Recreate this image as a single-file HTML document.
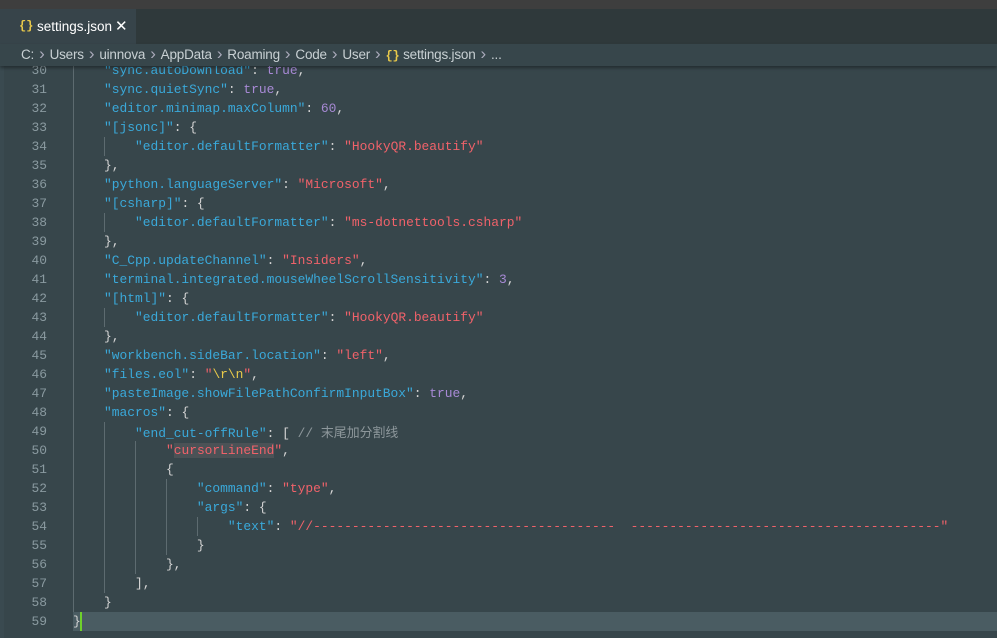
<!DOCTYPE html>
<html><head><meta charset="utf-8"><style>
body{margin:0;width:997px;height:638px;overflow:hidden;background:#37464b;font-family:"Liberation Sans","Noto Sans CJK SC",sans-serif;position:relative}
#top{position:absolute;left:0;top:0;width:997px;height:9px;background:#3e3e3e}
#tabs{position:absolute;left:0;top:9px;width:997px;height:35px;background:#2f393b}
#tab{position:absolute;left:0;top:0;width:136px;height:35px;background:#37444a;color:#fff;font-size:13.5px;line-height:35px}
#bc{position:absolute;left:0;top:44px;width:997px;height:22px;background:#37464b;color:#c8d0d3;font-size:13.5px;line-height:22px;box-shadow:0 2px 3px rgba(0,0,0,.35);z-index:5;letter-spacing:-0.2px}
.br{color:#e8c94a;font-family:"Liberation Mono",monospace;font-weight:bold;font-size:12px}
.sep{color:#aab;margin:0 5px;font-size:17px;line-height:20px}
#code{position:absolute;left:0;top:0;width:997px;height:638px;font-family:"Liberation Mono",monospace;font-size:12.92px}
.ln{position:absolute;left:0;width:47px;text-align:right;color:#8a9aa0;height:19px;line-height:19px}
.l{position:absolute;left:73px;height:19px;line-height:19px;white-space:pre;color:#d4d4d4}
.k{color:#3aa9da}.s{color:#f0626a}.b{color:#a88ad6}.c{color:#8d979b}
.g{position:absolute;width:1px;background:#5d6b70}
#cur{position:absolute;left:73px;top:612px;width:924px;height:19px;background:#4a5c62}
#lstrip{position:absolute;left:0;top:66px;width:4px;height:572px;background:#3a4a50}
</style></head><body>
<div id="top"></div>
<div id="tabs"><div id="tab"><span class="br" style="position:absolute;left:19px">{}</span><span style="position:absolute;left:37px">settings.json</span><span style="position:absolute;left:115px;font-size:15px">✕</span></div></div>
<div id="bc"><span style="margin-left:21px">C:</span><span class="sep">›</span>Users<span class="sep">›</span>uinnova<span class="sep">›</span>AppData<span class="sep">›</span>Roaming<span class="sep">›</span>Code<span class="sep">›</span>User<span class="sep">›</span><span class="br">{}</span> settings.json<span class="sep">›</span>...</div>
<div id="lstrip"></div>
<div id="cur"></div>
<div id="code">
<div class="g" style="left:73px;top:61px;height:551px"></div>
<div class="g" style="left:104px;top:137px;height:19px"></div>
<div class="g" style="left:104px;top:213px;height:19px"></div>
<div class="g" style="left:104px;top:308px;height:19px"></div>
<div class="g" style="left:104px;top:422px;height:171px"></div>
<div class="g" style="left:135px;top:441px;height:133px"></div>
<div class="g" style="left:166px;top:479px;height:76px"></div>
<div class="g" style="left:197px;top:517px;height:19px"></div>
<div class="ln" style="top:61px">30</div><div class="l" style="top:61px">    <span class="k">"sync.autoDownload"</span>: <span class="b">true</span>,</div>
<div class="ln" style="top:80px">31</div><div class="l" style="top:80px">    <span class="k">"sync.quietSync"</span>: <span class="b">true</span>,</div>
<div class="ln" style="top:99px">32</div><div class="l" style="top:99px">    <span class="k">"editor.minimap.maxColumn"</span>: <span class="b">60</span>,</div>
<div class="ln" style="top:118px">33</div><div class="l" style="top:118px">    <span class="k">"[jsonc]"</span>: {</div>
<div class="ln" style="top:137px">34</div><div class="l" style="top:137px">        <span class="k">"editor.defaultFormatter"</span>: <span class="s">"HookyQR.beautify"</span></div>
<div class="ln" style="top:156px">35</div><div class="l" style="top:156px">    },</div>
<div class="ln" style="top:175px">36</div><div class="l" style="top:175px">    <span class="k">"python.languageServer"</span>: <span class="s">"Microsoft"</span>,</div>
<div class="ln" style="top:194px">37</div><div class="l" style="top:194px">    <span class="k">"[csharp]"</span>: {</div>
<div class="ln" style="top:213px">38</div><div class="l" style="top:213px">        <span class="k">"editor.defaultFormatter"</span>: <span class="s">"ms-dotnettools.csharp"</span></div>
<div class="ln" style="top:232px">39</div><div class="l" style="top:232px">    },</div>
<div class="ln" style="top:251px">40</div><div class="l" style="top:251px">    <span class="k">"C_Cpp.updateChannel"</span>: <span class="s">"Insiders"</span>,</div>
<div class="ln" style="top:270px">41</div><div class="l" style="top:270px">    <span class="k">"terminal.integrated.mouseWheelScrollSensitivity"</span>: <span class="b">3</span>,</div>
<div class="ln" style="top:289px">42</div><div class="l" style="top:289px">    <span class="k">"[html]"</span>: {</div>
<div class="ln" style="top:308px">43</div><div class="l" style="top:308px">        <span class="k">"editor.defaultFormatter"</span>: <span class="s">"HookyQR.beautify"</span></div>
<div class="ln" style="top:327px">44</div><div class="l" style="top:327px">    },</div>
<div class="ln" style="top:346px">45</div><div class="l" style="top:346px">    <span class="k">"workbench.sideBar.location"</span>: <span class="s">"left"</span>,</div>
<div class="ln" style="top:365px">46</div><div class="l" style="top:365px">    <span class="k">"files.eol"</span>: <span class="s">"</span><span style="color:#e8c94a">\r\n</span><span class="s">"</span>,</div>
<div class="ln" style="top:384px">47</div><div class="l" style="top:384px">    <span class="k">"pasteImage.showFilePathConfirmInputBox"</span>: <span class="b">true</span>,</div>
<div class="ln" style="top:403px">48</div><div class="l" style="top:403px">    <span class="k">"macros"</span>: {</div>
<div class="ln" style="top:422px">49</div><div class="l" style="top:422px">        <span class="k">"end_cut-offRule"</span>: [ <span class="c">// <span style="font-family:'Noto Sans CJK SC',sans-serif">末尾加分割线</span></span></div>
<div class="ln" style="top:441px">50</div><div class="l" style="top:441px">            <span class="s">"<span style="background:#4b5256">cursorLineEnd</span>"</span>,</div>
<div class="ln" style="top:460px">51</div><div class="l" style="top:460px">            {</div>
<div class="ln" style="top:479px">52</div><div class="l" style="top:479px">                <span class="k">"command"</span>: <span class="s">"type"</span>,</div>
<div class="ln" style="top:498px">53</div><div class="l" style="top:498px">                <span class="k">"args"</span>: {</div>
<div class="ln" style="top:517px">54</div><div class="l" style="top:517px">                    <span class="k">"text"</span>: <span class="s">"//---------------------------------------  ----------------------------------------"</span></div>
<div class="ln" style="top:536px">55</div><div class="l" style="top:536px">                }</div>
<div class="ln" style="top:555px">56</div><div class="l" style="top:555px">            },</div>
<div class="ln" style="top:574px">57</div><div class="l" style="top:574px">        ],</div>
<div class="ln" style="top:593px">58</div><div class="l" style="top:593px">    }</div>
<div class="ln" style="top:612px">59</div><div class="l" style="top:612px">}</div>
<div style="position:absolute;left:80px;top:612px;width:2px;height:19px;background:#6fd12b"></div>
</div>
</body></html>
